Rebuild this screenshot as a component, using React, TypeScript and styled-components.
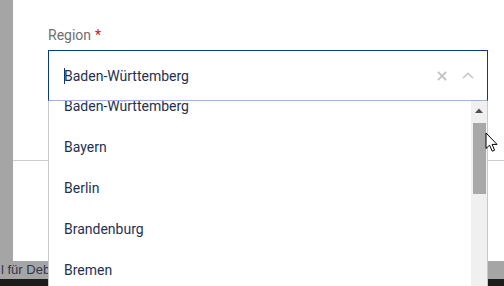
import React from 'react';
import styled, { createGlobalStyle } from 'styled-components';

const Global = createGlobalStyle`
  html, body { margin: 0; padding: 0; }
  body {
    width: 504px;
    height: 286px;
    overflow: hidden;
    background: #a5a5a5;
    font-family: Roboto, "Liberation Sans", sans-serif;
  }
`;

const Page = styled.div`
  position: relative;
  width: 504px;
  height: 286px;
  display: flex;
  flex-direction: column;
  overflow: hidden;
`;

const Modal = styled.div`
  margin-left: 13px;
  height: 261px;
  flex: none;
  background: #ffffff;
  display: flex;
  flex-direction: column;
`;

const ModalBody = styled.div`
  height: 161px;
  box-sizing: border-box;
  border-bottom: 1px solid #cdcdcd;
  padding: 25px 0 0 35px;
`;

const Field = styled.div`
  position: relative;
  width: 440px;
  z-index: 2;
`;

const Label = styled.label`
  display: block;
  font-size: 14px;
  line-height: 20px;
  color: #6f6f6f;
  margin-bottom: 5px;
`;

const Required = styled.span`
  color: #d0102b;
  margin-left: 4px;
`;

const Control = styled.div`
  height: 51px;
  box-sizing: border-box;
  border: 1px solid #0d3a78;
  border-bottom-color: #9fb6de;
  display: flex;
  align-items: center;
  padding: 0 13px 0 15px;
  background: #fff;
`;

const Value = styled.div`
  flex: 1;
  font-size: 14px;
  line-height: 20px;
  color: #1f3150;
  display: flex;
  align-items: center;
`;

const Caret = styled.span`
  display: inline-block;
  width: 1px;
  height: 16px;
  background: #0d3a78;
  margin-right: -1px;
`;

const Icons = styled.div`
  display: flex;
  align-items: center;
  gap: 15px;
`;

const Dropdown = styled.div`
  position: absolute;
  top: 100%;
  left: 0;
  width: 440px;
  height: 200px;
  box-sizing: border-box;
  border-left: 1px solid #c9c9c9;
  border-right: 1px solid #c9c9c9;
  background: #fff;
  display: flex;
`;

const Options = styled.ul`
  flex: 1;
  margin: 0;
  padding: 0;
  list-style: none;
  overflow: hidden;
`;

const OptionsInner = styled.div`
  margin-top: -15px;
`;

const Option = styled.li`
  height: 41px;
  line-height: 41px;
  padding-left: 15px;
  font-size: 14px;
  color: #1f3150;
  white-space: nowrap;
`;

const Scrollbar = styled.div`
  width: 16px;
  flex: none;
  background: #f0f0f0;
  display: flex;
  flex-direction: column;
  align-items: center;
`;

const ScrollButton = styled.div`
  height: 17px;
  width: 16px;
  display: flex;
  align-items: center;
  justify-content: center;
  padding-top: 1px;
  box-sizing: border-box;
`;

const Thumb = styled.div`
  margin-top: 5px;
  width: 13px;
  height: 71px;
  background: #a8a8a8;
`;

const Footer = styled.div`
  flex: 1;
`;

const PageStrip = styled.div`
  height: 18px;
  flex: none;
  padding-left: 1px;
  font-family: "Liberation Sans", Arial, sans-serif;
  font-size: 13px;
  line-height: 18px;
  color: #33364a;
  white-space: nowrap;
`;

const Taskbar = styled.div`
  height: 7px;
  flex: none;
  background: #1c1c1c;
`;

const Pointer = styled.svg`
  position: absolute;
  left: 485px;
  top: 132px;
  z-index: 5;
`;

const ClearIcon = () => (
  <svg width="10" height="10" viewBox="0 0 10 10">
    <path d="M1.5 1.5L8.5 8.5M8.5 1.5L1.5 8.5" stroke="#c3c3c3" strokeWidth="1.8" strokeLinecap="square" />
  </svg>
);

const ChevronUp = () => (
  <svg width="12" height="7" viewBox="0 0 12 7">
    <path d="M1 6L6 1.3L11 6" stroke="#c8c8c8" strokeWidth="1.6" fill="none" />
  </svg>
);

const regions = ['Baden-Württemberg', 'Bayern', 'Berlin', 'Brandenburg', 'Bremen', 'Hamburg'];

export default function App() {
  return (
    <>
      <Global />
      <Page>
        <Modal>
          <ModalBody>
            <Field>
              <Label>
                Region<Required>*</Required>
              </Label>
              <Control>
                <Value>
                  <Caret />
                  Baden-Württemberg
                </Value>
                <Icons>
                  <ClearIcon />
                  <ChevronUp />
                </Icons>
              </Control>
              <Dropdown>
                <Options>
                  <OptionsInner>
                    {regions.map((r) => (
                      <Option key={r}>{r}</Option>
                    ))}
                  </OptionsInner>
                </Options>
                <Scrollbar>
                  <ScrollButton>
                    <svg width="8" height="5" viewBox="0 0 8 5">
                      <path d="M0 5L4 0.5L8 5Z" fill="#505050" />
                    </svg>
                  </ScrollButton>
                  <Thumb />
                </Scrollbar>
              </Dropdown>
            </Field>
          </ModalBody>
          <Footer />
        </Modal>
        <PageStrip>l für Deb</PageStrip>
        <Taskbar />
        <Pointer width="14" height="21" viewBox="0 0 14 21">
          <path
            d="M1 1L1 16.5L4.6 13.2L7.2 19.2L9.6 18.2L7.1 12.4L12 12.4Z"
            fill="#ffffff"
            stroke="#000000"
            strokeWidth="1"
            strokeLinejoin="miter"
          />
        </Pointer>
      </Page>
    </>
  );
}
